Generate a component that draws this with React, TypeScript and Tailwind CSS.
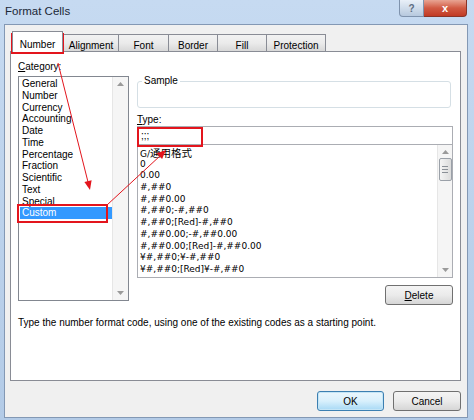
import React from 'react';

const categories = ['General', 'Number', 'Currency', 'Accounting', 'Date', 'Time', 'Percentage', 'Fraction', 'Scientific', 'Text', 'Special', 'Custom'];

const formats = [
  '0',
  '0.00',
  '#,##0',
  '#,##0.00',
  '#,##0;-#,##0',
  '#,##0;[Red]-#,##0',
  '#,##0.00;-#,##0.00',
  '#,##0.00;[Red]-#,##0.00',
  '¥#,##0;¥-#,##0',
  '¥#,##0;[Red]¥-#,##0',
];

const tabs = [
  { label: 'Alignment', w: 'w-[56px]' },
  { label: 'Font', w: 'w-[51px]' },
  { label: 'Border', w: 'w-[50px]' },
  { label: 'Fill', w: 'w-[50px]' },
  { label: 'Protection', w: 'w-[60px]' },
];

const ScrollArrow = ({ down }: { down?: boolean }) => (
  <svg width="7" height="4" viewBox="0 0 7 4">
    <path d={down ? 'M0 0h7L3.5 4z' : 'M0 4h7L3.5 0z'} fill="#9a9a9a" />
  </svg>
);

const App = () => {
  return (
    <div
      className="relative w-[474px] h-[420px] overflow-hidden bg-gradient-to-b from-[#c6daf1] to-[#b3cbe7] text-black"
      style={{ fontFamily: '"Liberation Sans", Arial, sans-serif' }}
    >
      {/* title bar */}
      <div className="flex h-[24px]">
        <span className="pl-[5px] pt-[5px] text-[11.5px] leading-[13px] text-[#1b2737]">Format Cells</span>
        <div className="ml-auto mr-[7px] flex h-[17px]">
          <div className="w-[25px] h-[17px] flex items-center justify-center border border-[#7f93ad] border-t-0 rounded-bl-[4px] bg-gradient-to-b from-[#e9f0f8] to-[#b7c9de] text-[10px] font-bold text-[#5d6d82]">
            ?
          </div>
          <div className="w-[43px] h-[17px] flex items-center justify-center border border-[#8a3427] border-t-0 border-l-0 rounded-br-[4px] bg-gradient-to-b from-[#e8a493] via-[#d15a43] to-[#c13a24] text-[11px] font-bold text-white">
            x
          </div>
        </div>
      </div>

      {/* dialog body */}
      <div className="ml-[4px] w-[464px] h-[394px] border border-[#8398b4] bg-[#f0f0f0] flex flex-col">
        {/* tabs */}
        <div className="h-[26px] flex items-end pl-[7px] text-[10px]">
          <div className="relative z-10 -mb-px w-[51px] h-[21px] border border-b-0 border-[#898c95] bg-white flex items-start justify-center pt-[5px]">
            Number
          </div>
          {tabs.map((t, i) => (
            <div
              key={t.label}
              className={`${t.w} ${i > 0 ? '-ml-px' : ''} h-[17px] border border-b-0 border-[#898c95] bg-gradient-to-b from-[#f2f2f2] via-[#ebebeb] to-[#d8d8d8] flex items-start justify-center pt-[3px]`}
            >
              {t.label}
            </div>
          ))}
        </div>

        {/* tab page */}
        <div className="ml-[5px] w-[451px] h-[330px] border border-[#898c95] bg-white text-[10px] leading-[11px]">
          <div className="flex pl-[7px]">
            {/* category column */}
            <div className="w-[111px] flex flex-col">
              <div className="pt-[9px]">
                <span className="underline">C</span>ategory:
              </div>
              <div className="mt-[4px] h-[225px] border border-[#828790] flex">
                <div className="flex-1 flex flex-col pt-px pl-px">
                  {categories.map((c) => (
                    <div
                      key={c}
                      className={`h-[11.75px] leading-[11.75px] pl-[2px] ${c === 'Custom' ? 'bg-[#3399ff] text-white' : ''}`}
                    >
                      {c}
                    </div>
                  ))}
                </div>
                <div className="w-[16px] bg-[#f5f5f5] border-l border-[#e6e6e6] flex flex-col items-center justify-between py-[5px]">
                  <ScrollArrow />
                  <ScrollArrow down />
                </div>
              </div>
            </div>

            {/* type column */}
            <div className="ml-[8px] w-[316px] flex flex-col">
              <div className="relative mt-[29px] w-[314px] h-[27px] border border-[#d5dfe5] rounded-[3px]">
                <span className="absolute -top-[7px] left-[4px] bg-white px-[2px]">Sample</span>
              </div>
              <div className="mt-[6px]">
                <span className="underline">T</span>ype:
              </div>
              <div className="mt-px h-[19px] border border-[#abadb3] pl-[3px] flex items-center">;;;</div>
              <div className="h-[133px] border border-t-0 border-[#abadb3] flex">
                <div
                  className="flex-1 flex flex-col pl-[2px] pt-[2px] text-[9px]"
                  style={{ fontFamily: '"DejaVu Sans", "Noto Sans CJK SC", sans-serif' }}
                >
                  <div className="h-[11.7px] leading-[11.7px] whitespace-nowrap">
                    G/<span className="text-[10.5px]" style={{ fontFamily: '"Noto Sans CJK SC", sans-serif' }}>通用格式</span>
                  </div>
                  {formats.map((f) => (
                    <div key={f} className="h-[11.7px] leading-[11.7px] whitespace-nowrap">
                      {f}
                    </div>
                  ))}
                </div>
                <div className="w-[15px] bg-[#f5f5f5] border-l border-[#e6e6e6] flex flex-col items-center py-[5px]">
                  <ScrollArrow />
                  <div className="mt-[4px] w-[13px] h-[23px] border border-[#9aa0a8] rounded-[2px] bg-gradient-to-r from-[#f4f4f4] to-[#dcdcdc] flex flex-col items-center justify-center gap-[2px]">
                    <div className="w-[6px] h-px bg-[#8a8f96]" />
                    <div className="w-[6px] h-px bg-[#8a8f96]" />
                    <div className="w-[6px] h-px bg-[#8a8f96]" />
                  </div>
                  <div className="mt-auto">
                    <ScrollArrow down />
                  </div>
                </div>
              </div>
              <div className="mt-[7px] self-end w-[68px] h-[20px] border border-[#707070] rounded-[3px] bg-gradient-to-b from-[#f4f4f4] via-[#ebebeb] to-[#d6d6d6] flex items-center justify-center">
                <span className="underline">D</span>elete
              </div>
            </div>
          </div>
          <div className="mt-[12px] pl-[7px]">Type the number format code, using one of the existing codes as a starting point.</div>
        </div>

        {/* dialog buttons */}
        <div className="mt-[10px] mr-[6px] flex justify-end gap-[9px] text-[10px]">
          <div className="w-[67px] h-[20px] border border-[#3c7fb1] rounded-[3px] bg-gradient-to-b from-[#eaf6fd] via-[#d9f0fc] to-[#a7d9f5] shadow-[inset_0_0_0_1px_#c4e5f6] flex items-center justify-center">
            OK
          </div>
          <div className="w-[68px] h-[20px] border border-[#707070] rounded-[3px] bg-gradient-to-b from-[#f4f4f4] via-[#ebebeb] to-[#d6d6d6] flex items-center justify-center">
            Cancel
          </div>
        </div>
      </div>

      {/* red annotations */}
      <div className="absolute left-[11px] top-[33px] w-[53px] h-[21px] border-2 border-[#e3151d]" />
      <div className="absolute left-[17px] top-[204px] w-[91px] h-[19px] border-2 border-[#e3151d]" />
      <div className="absolute left-[137px] top-[127px] w-[66px] h-[20px] border-2 border-[#e3151d]" />
      <svg className="absolute left-0 top-0 pointer-events-none" width="474" height="420">
        <line x1="58" y1="63" x2="88.5" y2="184" stroke="#e3151d" strokeWidth="1" />
        <polygon points="90,190 84.4,182.1 91.6,180.3" fill="#e3151d" />
        <line x1="107" y1="205" x2="161" y2="155" stroke="#e3151d" strokeWidth="1" />
        <polygon points="166,150 162.1,159 156.7,153.2" fill="#e3151d" />
      </svg>
    </div>
  );
};

export default App;
